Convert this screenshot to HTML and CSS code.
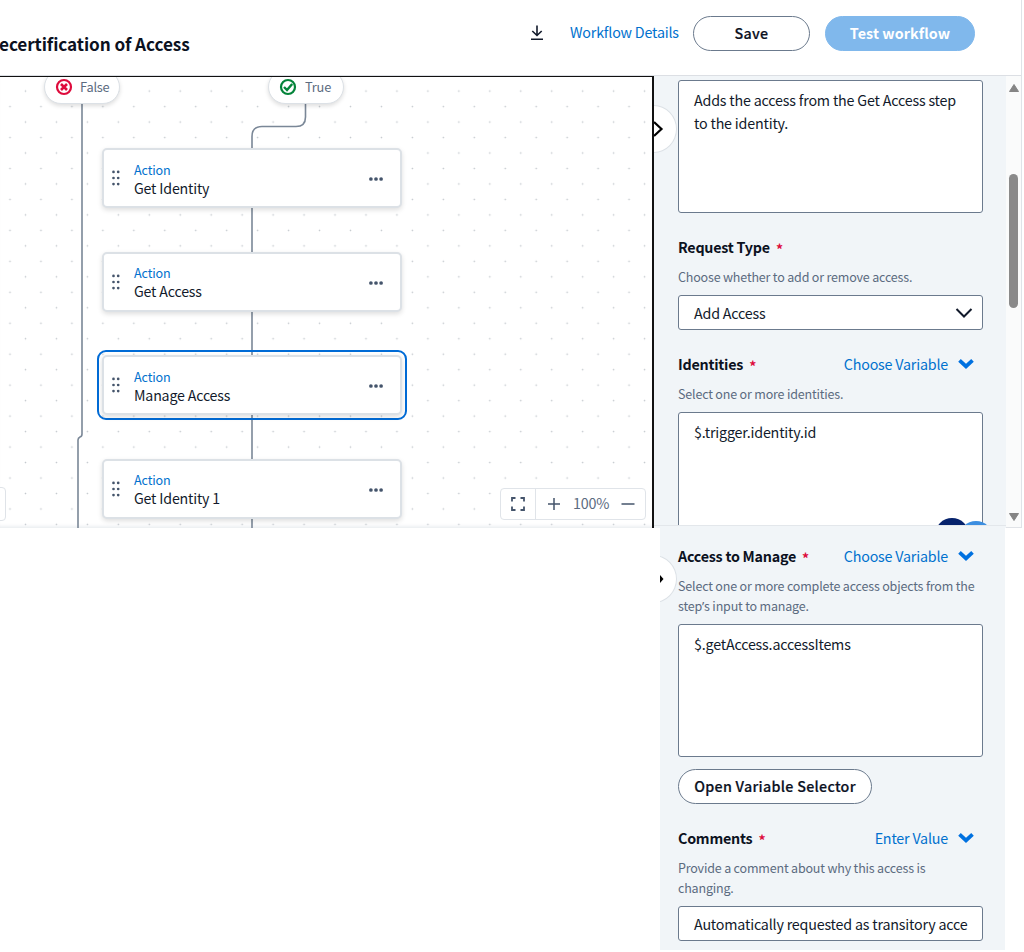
FILE: index.html
```html
<!DOCTYPE html>
<html lang="en">
<head>
<meta charset="utf-8">
<title>Workflow Editor</title>
<link rel="stylesheet" href="styles.css">
</head>
<body>
<svg class="defs" width="0" height="0" aria-hidden="true">
  <symbol id="grip" viewBox="0 0 8 16"><g fill="#44546b"><circle cx="1.5" cy="1.9" r="1.35"/><circle cx="6.2" cy="1.9" r="1.35"/><circle cx="1.5" cy="8" r="1.35"/><circle cx="6.2" cy="8" r="1.35"/><circle cx="1.5" cy="14.1" r="1.35"/><circle cx="6.2" cy="14.1" r="1.35"/></g></symbol>
  <symbol id="more" viewBox="0 0 16 4"><g fill="#44546b"><circle cx="2.9" cy="2" r="1.85"/><circle cx="8" cy="2" r="1.85"/><circle cx="13.1" cy="2" r="1.85"/></g></symbol>
  <symbol id="chev" viewBox="0 0 16 11"><path d="M1.500 2.300 8 8.300 14.500 2.300" fill="none" stroke="#0071e0" stroke-width="3.8"/></symbol>
</svg>
<div class="page">
  <section class="editor">
    <header class="topbar">
      <h1 class="title">ecertification of Access</h1>
      <div class="actions">
        <svg class="download" width="14" height="16" viewBox="0 0 14 16"><path d="M7 0.5V10M2.3 6 7 10.5 11.7 6M1 14.2H13" fill="none" stroke="#121a2b" stroke-width="1.6"/></svg>
        <a class="details">Workflow Details</a>
        <button class="pill save">Save</button>
        <button class="pill test">Test workflow</button>
      </div>
    </header>
    <div class="workspace">
      <div class="canvas">
        <svg class="edges" width="652" height="451" viewBox="0 77 652 451">
          <g fill="none" stroke="#7a8797" stroke-width="1.6">
            <path d="M82 103V434Q82 436.500 80 437Q78 438 78 440V528"/>
            <path d="M305.500 103V117Q305.500 126.500 296 126.500H262Q252 126.500 252 136.500V150"/>
            <path d="M252 207V528"/>
          </g>
        </svg>
        <div class="branch no"><svg width="18" height="18" viewBox="0 0 18 18"><circle cx="9" cy="9" r="7" fill="#fff" stroke="#de0b3c" stroke-width="2.2"/><path d="M6 6 12 12M12 6 6 12" stroke="#de0b3c" stroke-width="2.6"/></svg><span>False</span></div>
        <div class="branch yes"><svg width="18" height="18" viewBox="0 0 18 18"><circle cx="9" cy="9" r="7" fill="#fff" stroke="#04843a" stroke-width="2.2"/><path d="M5 9 8 12 13.200 6" fill="none" stroke="#04843a" stroke-width="2.4"/></svg><span>True</span></div>
        <div class="halo"></div>
        <div class="node n1"><svg class="grip"><use href="#grip"/></svg><div class="label"><span class="kind">Action</span><span class="name">Get Identity</span></div><svg class="more"><use href="#more"/></svg></div>
        <div class="node n2"><svg class="grip"><use href="#grip"/></svg><div class="label"><span class="kind">Action</span><span class="name">Get Access</span></div><svg class="more"><use href="#more"/></svg></div>
        <div class="node n3"><svg class="grip"><use href="#grip"/></svg><div class="label"><span class="kind">Action</span><span class="name">Manage Access</span></div><svg class="more"><use href="#more"/></svg></div>
        <div class="node n4"><svg class="grip"><use href="#grip"/></svg><div class="label"><span class="kind">Action</span><span class="name">Get Identity 1</span></div><svg class="more"><use href="#more"/></svg></div>
        <div class="leftctl"></div>
        <div class="zoomctl">
          <span class="fit"><svg width="16" height="16" viewBox="0 0 16 16"><path d="M2 5.500V2H5.500M10.500 2H14V5.500M14 10.500V14H10.500M5.500 14H2V10.500" fill="none" stroke="#44546b" stroke-width="1.8"/></svg></span>
          <svg class="plus" width="14" height="14" viewBox="0 0 14 14"><path d="M1 7H13M7 1V13" stroke="#44546b" stroke-width="1.5"/></svg>
          <span class="pct">100%</span>
          <svg width="14" height="14" viewBox="0 0 14 14"><path d="M.5 7H13.500" stroke="#44546b" stroke-width="1.5"/></svg>
        </div>
      </div>
      <div class="panel">
        <div class="toggle"><svg width="12" height="18" viewBox="0 0 12 18"><path d="M0 2 7.500 9 0 16" fill="none" stroke="#000" stroke-width="2.2"/></svg></div>
        <div class="area">Adds the access from the Get Access step<br>to the identity.</div>
        <div class="row first"><span class="lab">Request Type</span><span class="req">*</span></div>
        <div class="hint">Choose whether to add or remove access.</div>
        <div class="field"><span>Add Access</span><svg width="18" height="12" viewBox="0 0 18 12"><path d="M1.500 2 9 9.500 16.500 2" fill="none" stroke="#121a2b" stroke-width="2"/></svg></div>
        <div class="row second"><span class="lab">Identities</span><span class="req">*</span><span class="pick">Choose Variable</span><svg class="chev"><use href="#chev"/></svg></div>
        <div class="hint">Select one or more identities.</div>
        <div class="area">$.trigger.identity.id</div>
        <i class="bubble navy"></i><i class="bubble sky"></i>
        <i class="seam"></i>
      </div>
      <div class="scroll">
        <svg width="10" height="8" viewBox="0 0 10 8"><path d="M5 .5 9.500 7.500H.5Z" fill="#858585" stroke="#858585" stroke-linejoin="round"/></svg>
        <div class="thumb"></div>
        <svg width="10" height="8" viewBox="0 0 10 8"><path d="M5 7.500 9.500 .5H.5Z" fill="#858585" stroke="#858585" stroke-linejoin="round"/></svg>
      </div>
    </div>
  </section>
  <section class="lower">
    <div class="toggle"><svg width="4" height="8" viewBox="0 0 4 8"><path d="M0 0 3.500 4 0 8Z" fill="#000"/></svg></div>
    <div class="row"><span class="lab">Access to Manage</span><span class="req">*</span><span class="pick">Choose Variable</span><svg class="chev"><use href="#chev"/></svg></div>
    <div class="hint">Select one or more complete access objects from the<br>step<span class="apos">’</span>s input to manage.</div>
    <div class="area">$.getAccess.accessItems</div>
    <button class="pill open">Open Variable Selector</button>
    <div class="row third"><span class="lab">Comments</span><span class="req">*</span><span class="pick">Enter Value</span><svg class="chev"><use href="#chev"/></svg></div>
    <div class="hint last">Provide a comment about why this access is<br>changing.</div>
    <div class="field"><span>Automatically requested as transitory acce</span></div>
  </section>
</div>
</body>
</html>
```
FILE: styles.css
```css
* { box-sizing: border-box; }
body { margin: 0; background: #fff; color: #121a2b; font: 14.3px/23px "Noto Sans CJK SC", "Noto Sans", sans-serif; letter-spacing: -.2px; }
.defs { display: block; height: 0; }
.page { width: 1024px; height: 952px; overflow: hidden; background: #fff; }
.editor { width: 1022px; height: 528px; border-right: 1px solid #dfe3e8; overflow: hidden; display: flex; flex-direction: column; }
.topbar { height: 76px; flex: none; display: flex; justify-content: space-between; border-bottom: 1px solid #dcdfe4; }
.title { margin: 32px 0 0 -1px; font-size: 17.2px; line-height: 23px; font-weight: 700; letter-spacing: -.1px; white-space: nowrap; color: #0c121f; }
.actions { display: flex; align-items: center; height: 36px; margin: 15px 46px 0 0; }
.download { margin-top: -1px; }
.details { margin: -3px 15px 0 26px; color: #0071ce; width: 108px; white-space: nowrap; }
.pill { height: 35px; padding: 0 0 2px; border: 1px solid #6b7a8d; border-radius: 18px; background: #fff; color: #0c121f; font: 500 14.3px/31px "Noto Sans CJK SC", sans-serif; letter-spacing: .28px; white-space: nowrap; -webkit-text-stroke: .2px; }
.save { width: 117px; margin-right: 15px; }
.test { width: 150px; background: #80b8ec; border-color: #80b8ec; color: #fff; font-weight: 700; letter-spacing: .1px; -webkit-text-stroke: 0; }
.workspace { flex: 1; min-height: 0; display: flex; }
.canvas { position: relative; width: 654px; flex: none; border-top: 1px solid #111; border-right: 2px solid #111; overflow: hidden; background-image: radial-gradient(circle at 1.5px 1.5px, #c3c8cd 0, #c3c8cd .7px, transparent 1.1px), radial-gradient(circle at 1.5px 1.5px, #c3c8cd 0, #c3c8cd .7px, transparent 1.1px); background-size: 30.960px 30.960px; background-position: 24px 12.600px, 8.500px 28.100px; box-shadow: inset 0 -4px 4px -3px #e3e7eb; }
.edges { position: absolute; left: 0; top: 0; }
.branch { position: absolute; top: -7px; width: 76px; height: 34px; border: 1.500px solid #dce1e6; border-radius: 17px; background: #fff; box-shadow: 0 2px 4px #0002; display: flex; align-items: center; gap: 7px; padding-left: 10px; color: #5b6b80; font-size: 12.8px; }
.branch span { margin-top: -2px; }
.no { left: 44px; }
.yes { left: 268px; }
.yes svg { margin-right: 1px; }
.node { position: absolute; left: 102px; width: 300px; height: 60px; border: 2px solid #dce1e6; border-radius: 5px; background: #fff; box-shadow: 0 2px 5px #0002; display: flex; align-items: center; padding: 0 16px 0 8px; }
.n1 { top: 71px; }
.n2 { top: 175px; }
.n3 { top: 278px; }
.n4 { top: 382px; }
.n1 .label, .n3 .label { margin-top: 1px; }
.halo { position: absolute; left: 97px; top: 273px; width: 310px; height: 70px; border: 2px solid #006bd6; border-radius: 9px; }
.grip { width: 8px; height: 16px; }
.label { flex: 1; margin: -1px 0 0 14px; display: flex; flex-direction: column; line-height: 19px; }
.kind { color: #0071ce; font-size: 12.6px; letter-spacing: -.15px; }
.name { font-size: 14.2px; letter-spacing: -.18px; }
.more { width: 16px; height: 4px; margin-top: 2px; }
.leftctl { position: absolute; left: -10px; top: 410px; width: 16px; height: 34px; border: 1px solid #dfe3e8; border-radius: 4px; background: #fff; }
.zoomctl { position: absolute; left: 500px; top: 411px; width: 146px; height: 32px; border: 1px solid #e0e4e9; border-radius: 4px; background: #fff; display: flex; align-items: center; color: #5b6b80; }
.fit { width: 35px; height: 30px; border-right: 1px solid #e0e4e9; display: flex; align-items: center; justify-content: center; }
.plus { margin-left: 11px; }
.pct { width: 36px; margin: -3px 12px 0; font-size: 14.3px; white-space: nowrap; }
.panel { position: relative; width: 352px; flex: none; background: #f1f5f8; padding: 4px 23px 0 24px; overflow: hidden; }
.seam { position: absolute; left: 0; right: 0; bottom: 0; height: 3px; background: #f1f5f8; border-top: 1px solid #e3e7eb; }
.area { width: 305px; height: 133px; border: 1px solid #6b7a8d; border-radius: 3px; background: #fff; padding: 7px 15px; white-space: nowrap; }
.row { display: flex; align-items: center; height: 24px; padding-right: 9px; white-space: nowrap; }
.first { margin-top: 22px; }
.second { margin-top: 22px; }
.lab { font-weight: 700; margin-top: -2px; color: #0c121f; letter-spacing: -.24px; }
.req { color: #de0b3c; font-weight: 700; margin: 5px 0 0 6px; font-size: 14px; }
.pick { margin: -1px 10px 0 auto; color: #0071ce; }
.chev { width: 16px; height: 11px; margin-top: -1px; }
.hint { margin: 8px 0; color: #5b6b80; font-size: 12.5px; line-height: 20px; letter-spacing: -.18px; white-space: nowrap; }
.apos { font-family: "Noto Sans", sans-serif; }
.field { width: 305px; height: 35px; border: 1px solid #6b7a8d; border-radius: 3px; background: #fff; padding: 0 9px 0 15px; display: flex; align-items: center; justify-content: space-between; white-space: nowrap; overflow: hidden; }
.field span { margin-top: -1px; }
.toggle { position: absolute; left: -24px; top: 29px; width: 47px; height: 48px; border: 1px solid #dce1e6; border-radius: 50%; background: #fff; display: flex; align-items: center; padding-left: 23px; }
.bubble { position: absolute; width: 34px; height: 34px; border-radius: 50%; }
.navy { left: 281px; top: 442px; background: #06226c; }
.sky { left: 305px; top: 445px; background: #3c8ee0; }
.scroll { width: 15px; flex: none; background: #fafbfb; border-bottom: 1px solid #e0e3e7; display: flex; flex-direction: column; align-items: center; padding: 8px 0 6px; }
.thumb { width: 9px; height: 134px; margin: 82px 0 auto; border-radius: 5px; background: #8a8a8a; }
.lower { position: relative; width: 345px; height: 422px; margin-left: 660px; background: #f1f5f8; padding: 16px 22px 0 18px; overflow: hidden; }
.lower .hint { margin-bottom: 7px; }
.lower .last { margin-bottom: 8px; }
.lower .toggle { left: -30px; top: 27px; padding-left: 29px; }
.open { display: block; width: 194px; margin-top: 12px; }
.third { margin-top: 22px; }
```
